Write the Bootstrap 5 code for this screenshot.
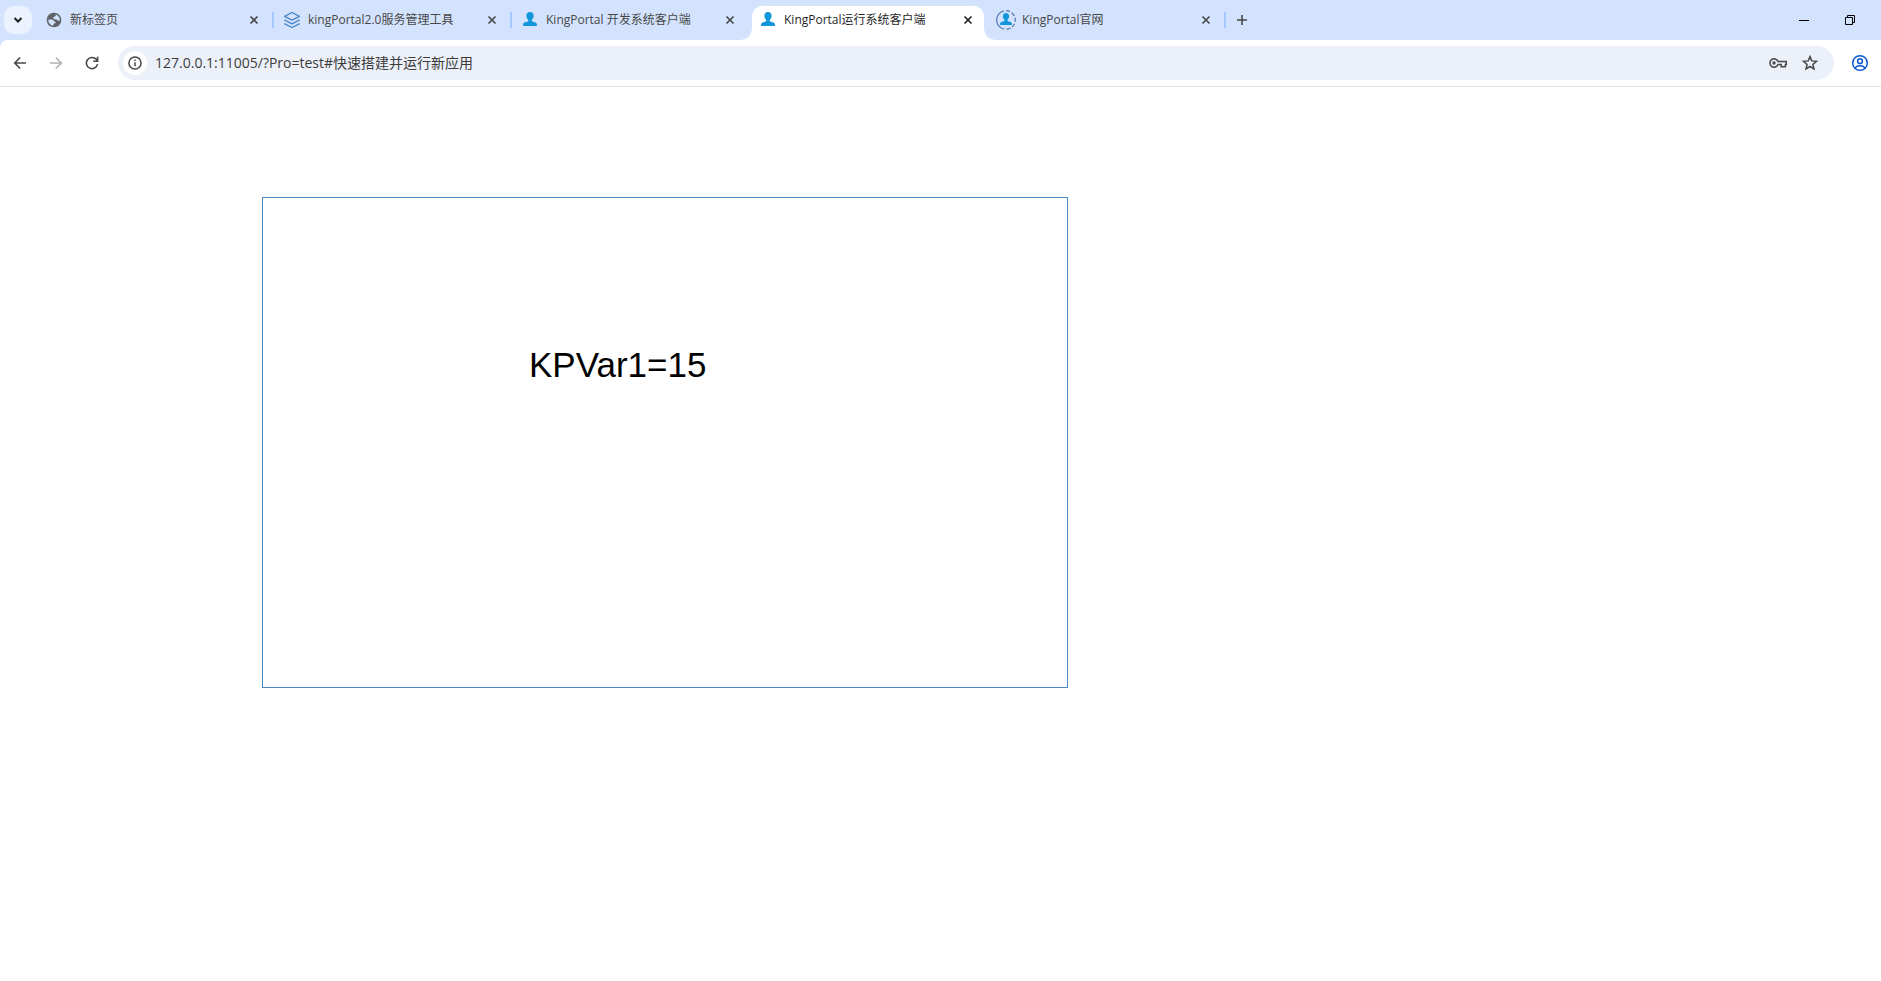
<!DOCTYPE html>
<html lang="zh-CN">
<head>
<meta charset="utf-8">
<meta name="viewport" content="width=device-width, initial-scale=1">
<title>KingPortal运行系统客户端</title>
<link href="https://cdn.jsdelivr.net/npm/bootstrap@5.3.0/dist/css/bootstrap.min.css" rel="stylesheet">
<style>
  body { font-family: "Open Sans", "Noto Sans CJK SC", sans-serif; color: #1f1f1f; background: #fff; }
  svg { display: block; flex: none; }
  header { background: #d3e3fd; }
  .strip { height: 40px; }
  .plain { border: 0; padding: 0; background: none; color: #474747; display: flex; align-items: center; justify-content: center; flex: none; }
  .tab-search { width: 28px; height: 28px; margin: 6px 4px 6px; border-radius: 10px; background: #ecf2fd; color: #1f1f1f; }
  .tab-new { width: 32px; height: 40px; }
  .page-tab { flex: 0 1 238px; min-width: 60px; height: 40px; padding: 0 12px 0 8px; position: relative; font-size: 12px; line-height: 20px; color: #474747; }
  .page-tab a { color: inherit; height: 28px; gap: 6px; }
  .page-tab.divided::after { content: ""; position: absolute; right: 0; top: 12px; width: 2px; height: 16px; background: #a8c7fa; }
  .favicon { width: 20px; display: flex; justify-content: center; flex: none; }
  .favicon-person { padding-bottom: 2px; }
  .page-tab.current { color: #1f1f1f; }
  .page-tab.current::before { content: ""; position: absolute; left: 2px; right: 4px; top: 6px; bottom: 0; background: #fff; border-radius: 10px 10px 0 0; }
  .page-tab.current > * { position: relative; }
  .page-tab.current .plain { color: #1f1f1f; }
  .foot { position: absolute !important; bottom: 0; width: 10px; height: 10px; }
  .foot-l { left: -8px; background: radial-gradient(circle at 0 0, transparent 9px, #fff 10px); }
  .foot-r { right: -6px; background: radial-gradient(circle at 100% 0, transparent 9px, #fff 10px); }
  .close-tab { width: 16px; height: 16px; }
  .win { width: 46px; height: 40px; color: #000; }
  .toolbar { height: 47px; border-bottom: 1px solid #dfe1e4; border-top-left-radius: 8px; padding: 0 12px 0 4px; background: #fff; }
  .nav-btn { width: 32px; height: 32px; margin-right: 4px; }
  .nav-off { color: #b3b3b3; }
  .address { height: 34px; border-radius: 17px; background: #ecf0f9; padding: 0 15px 0 5px; margin: 0 17px 0 6px; }
  .info { width: 24px; height: 24px; border-radius: 50%; background: #fff; }
  .url { border: 0; outline: 0; background: none; padding: 0; margin-left: 8px; font-size: 14px; line-height: 24px; color: #3c3c3c; min-width: 0; }
  .key { margin-right: 14px; }
  .canvas { padding: 110px 262px; }
  .frame { width: 806px; max-width: 100%; min-height: 491px; border: 1px solid #4a89c5; padding: 147px 266px; }
  .reading { font: 35px/40px "Liberation Sans", Arial, sans-serif; color: #000; white-space: nowrap; }
</style>
<script src="https://cdn.jsdelivr.net/npm/bootstrap@5.3.0/dist/js/bootstrap.bundle.min.js"></script>
</head>
<body>
<svg width="0" height="0" class="d-none" aria-hidden="true">
  <symbol id="x" viewBox="0 0 16 16"><path d="M4.5 4.5l7 7M11.5 4.5l-7 7" stroke="currentColor" stroke-width="1.6"/></symbol>
  <symbol id="person" viewBox="0 0 14 14"><path fill="#1296db" d="M7 0C4.700 0 3.400 1.600 3.400 3.700c0 1.700.6 3.200 1.800 4.100v1.500C4 9.900.3 10.300.1 12.200V14h13.800v-1.800c-.2-1.900-3.900-2.300-5.100-2.900V7.800c1.200-.9 1.800-2.400 1.800-4.100C10.600 1.600 9.300 0 7 0z"/></symbol>
</svg>

<header>
  <nav class="strip d-flex align-items-start" aria-label="标签页">
    <button class="plain tab-search" type="button" aria-label="搜索标签页">
      <svg width="10" height="8" viewBox="0 0 10 8"><path d="M1.500 2L5 5.500 8.500 2" fill="none" stroke="currentColor" stroke-width="2"/></svg>
    </button>
    <div class="page-tab divided d-flex align-items-center">
      <a href="#" class="d-flex align-items-center flex-grow-1 text-decoration-none overflow-hidden">
        <span class="favicon"><svg width="16" height="16" viewBox="0 0 24 24"><circle cx="12" cy="12" r="11" fill="#5f6368"/><path fill="#d3e3fd" d="M3.400 11.500C6 11.200 8.500 11 10.500 12c1.800.8 1.400 2.300 3 2.700 1.700.4 1.300 1.900-.2 2.300-1.500.4-2.300.9-2.200 2.500v1.100A8.700 8.700 0 0 1 3.400 11.500zM14.500 3.600a8.800 8.800 0 0 1 6.100 9.200c-1.600.8-3 .2-4-.9-1-1-2.400-.7-3.600-1-1.700-.4-2.600-2-1.600-3.200.8-1 2.600-.6 3-2 .2-.7.200-1.400.1-2.100z"/></svg></span>
        <span class="text-nowrap">新标签页</span>
      </a>
      <button class="plain close-tab" type="button" aria-label="关闭"><svg width="16" height="16"><use href="#x"/></svg></button>
    </div>
    <div class="page-tab divided d-flex align-items-center">
      <a href="#" class="d-flex align-items-center flex-grow-1 text-decoration-none overflow-hidden">
        <span class="favicon"><svg width="18" height="18" viewBox="0 0 18 18" fill="none" stroke="#4a86c8" stroke-width="1.300" stroke-linejoin="round"><path d="M9 1.500l7.500 3.800L9 9.100 1.500 5.300zM1.300 8.900L9 12.800l7.700-3.900M1.300 12.600L9 16.500l7.700-3.900"/></svg></span>
        <span class="text-nowrap">kingPortal2.0服务管理工具</span>
      </a>
      <button class="plain close-tab" type="button" aria-label="关闭"><svg width="16" height="16"><use href="#x"/></svg></button>
    </div>
    <div class="page-tab d-flex align-items-center">
      <a href="#" class="d-flex align-items-center flex-grow-1 text-decoration-none overflow-hidden">
        <span class="favicon favicon-person"><svg width="14" height="14"><use href="#person"/></svg></span>
        <span class="text-nowrap">KingPortal 开发系统客户端</span>
      </a>
      <button class="plain close-tab" type="button" aria-label="关闭"><svg width="16" height="16"><use href="#x"/></svg></button>
    </div>
    <div class="page-tab current d-flex align-items-center">
      <span class="foot foot-l"></span><span class="foot foot-r"></span>
      <a href="#" class="d-flex align-items-center flex-grow-1 text-decoration-none overflow-hidden" aria-current="page">
        <span class="favicon favicon-person"><svg width="14" height="14"><use href="#person"/></svg></span>
        <span class="text-nowrap">KingPortal运行系统客户端</span>
      </a>
      <button class="plain close-tab" type="button" aria-label="关闭"><svg width="16" height="16"><use href="#x"/></svg></button>
    </div>
    <div class="page-tab divided d-flex align-items-center">
      <a href="#" class="d-flex align-items-center flex-grow-1 text-decoration-none overflow-hidden">
        <span class="favicon"><svg width="20" height="20" viewBox="0 0 20 20"><path d="M8 .9A9.300 9.300 0 0 0 8 19.100" fill="none" stroke="#5b7fb5" stroke-width="1.300"/><path d="M10 .7A9.300 9.300 0 0 1 10 19.300" fill="none" stroke="#5b7fb5" stroke-width="1.300" stroke-dasharray="4.200 1.900"/><svg x="4" y="3" width="12" height="12"><use href="#person"/></svg></svg></span>
        <span class="text-nowrap">KingPortal官网</span>
      </a>
      <button class="plain close-tab" type="button" aria-label="关闭"><svg width="16" height="16"><use href="#x"/></svg></button>
    </div>
    <button class="plain tab-new" type="button" aria-label="新建标签页">
      <svg width="12" height="12" viewBox="0 0 12 12"><path d="M6 1v10M1 6h10" stroke="currentColor" stroke-width="1.600"/></svg>
    </button>
    <div class="d-flex ms-auto pe-2">
      <button class="plain win" type="button" aria-label="最小化"><svg width="10" height="10"><path d="M0 5.500h10" stroke="currentColor"/></svg></button>
      <button class="plain win" type="button" aria-label="还原"><svg width="10" height="10" fill="none" stroke="currentColor"><path d="M.5 2.500h7v7h-7zM2.500 2.500v-2h7v7h-2"/></svg></button>
    </div>
  </nav>

  <div class="toolbar d-flex align-items-center">
    <button class="plain nav-btn" type="button" aria-label="后退"><svg width="14" height="14" viewBox="0 0 14 14" fill="none" stroke="currentColor" stroke-width="1.600"><path d="M13 7H2M7.200 1.500L1.700 7l5.500 5.500"/></svg></button>
    <button class="plain nav-btn nav-off" type="button" aria-label="前进"><svg width="14" height="14" viewBox="0 0 14 14" fill="none" stroke="currentColor" stroke-width="1.600"><path d="M1 7h11M6.800 1.500L12.300 7l-5.500 5.500"/></svg></button>
    <button class="plain nav-btn" type="button" aria-label="刷新"><svg width="14" height="14" viewBox="0 0 14 14" fill="none" stroke="currentColor" stroke-width="1.600"><path d="M12.500 8.200A5.600 5.600 0 1 1 11.200 3.300L12.600 4.800M12.600.8V5.200H8.200"/></svg></button>
    <div class="address d-flex align-items-center flex-grow-1">
      <button class="plain info" type="button" aria-label="查看网站信息"><svg width="14" height="14" viewBox="0 0 14 14" fill="none" stroke="currentColor" stroke-width="1.500"><circle cx="7" cy="7" r="6.100"/><path d="M7 6.200v4.100M7 3.600v1.500"/></svg></button>
      <input class="url flex-grow-1" type="text" aria-label="地址" value="127.0.0.1:11005/?Pro=test#快速搭建并运行新应用">
      <button class="plain key" type="button" aria-label="密码"><svg width="18" height="12" viewBox="0 0 18 12" fill="none" stroke="currentColor" stroke-width="1.500"><path d="M9 4.500A4.200 4.200 0 1 0 9 7.500H12.200V9.700h4.200V7.500h.9v-3z"/><circle cx="5" cy="6" r="1.700" fill="currentColor" stroke="none"/></svg></button>
      <button class="plain" type="button" aria-label="收藏"><svg width="18" height="18" viewBox="0 0 18 18" fill="none" stroke="currentColor" stroke-width="1.500"><path d="M9 2.600l1.800 4.300 4.700.4-3.600 3.100 1.100 4.600L9 12.500 5 15l1.100-4.600-3.600-3.100 4.700-.4z"/></svg></button>
    </div>
    <button class="plain" type="button" aria-label="用户"><svg width="18" height="18" viewBox="0 0 18 18" fill="none" stroke="#0b57d0" stroke-width="1.500"><circle cx="9" cy="9" r="7.300"/><circle cx="9" cy="7.200" r="2.400"/><path d="M3.800 14c1.500-1.600 3.200-2.200 5.200-2.200s3.700.6 5.200 2.200"/></svg></button>
  </div>
</header>

<main class="canvas">
  <section class="frame"><div class="reading">KPVar1=15</div></section>
</main>
</body>
</html>
